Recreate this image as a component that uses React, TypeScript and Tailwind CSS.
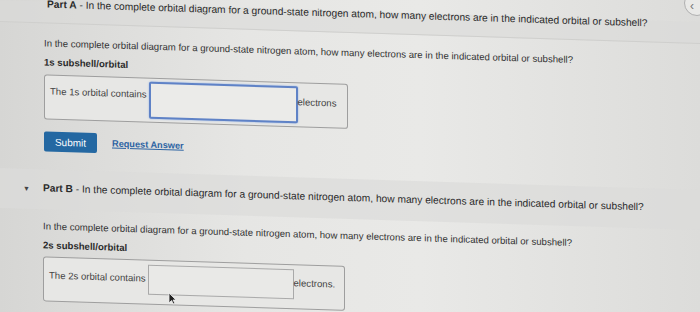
export default function App() {
  const q =
    "In the complete orbital diagram for a ground-state nitrogen atom, how many electrons are in the indicated orbital or subshell?";
  return (
    <div
      className="relative h-[312px] w-[700px] overflow-hidden bg-[linear-gradient(90deg,#d6d6d4,#e6e6e4_35%,#e9e9e7_60%,#dcdcda)] text-[#2b2b2b]"
      style={{ fontFamily: '"Liberation Sans", Arial, sans-serif' }}
    >
      {/* photo is a little tilted */}
      <div className="w-[720px] origin-top-left skew-y-[1.8deg]">
        <div className="flex h-[22px] items-start border-b border-[#cfcfcd] bg-[#dadad8]/60 pl-[47px] text-[10.2px]">
          <span className="-mt-[5px]">
            <b>Part A</b> - {q}
          </span>
        </div>

        <div className="pl-[44px] pt-[14px] text-[9.6px] leading-[11px]">
          <p className="text-[#333]">{q}</p>
          <p className="mt-[8px] font-bold">1s subshell/orbital</p>
          <div className="mt-[7px] flex h-[45px] w-[304px] items-start rounded-[3px] border border-[#9e9e9e] bg-[#e7e7e5] pl-[5px] pt-[3px]">
            <span className="mt-[7px] text-[#444]">The 1s orbital contains</span>
            <div className="ml-[2px] h-[37px] w-[149px] rounded-[2px] border-2 border-[#5f82c6] bg-[#ebebe9] shadow-[0_0_2px_#8fb0e8]" />
            <span className="mt-[10px] text-[#444]">electrons</span>
          </div>
          <div className="mt-[12px] flex items-center gap-[15px]">
            <button className="h-[20px] w-[53px] rounded-[2px] bg-[#2468a2] text-[10px] text-white">
              Submit
            </button>
            <span className="text-[9.2px] font-bold text-[#2d64a3] underline">
              Request Answer
            </span>
          </div>
        </div>

        <div className="mt-[18px] flex h-[40px] items-center bg-[#dcdcda]/70 pl-[23px] text-[10.2px]">
          <span className="mr-[13px] text-[7px] text-[#444]">▼</span>
          <span className="-mt-[3px]">
            <b>Part B</b> - {q}
          </span>
        </div>

        <div className="pl-[43px] pt-[11px] text-[9.6px] leading-[11px]">
          <p className="text-[#333]">{q}</p>
          <p className="mt-[8px] font-bold">2s subshell/orbital</p>
          <div className="mt-[6px] flex h-[45px] w-[302px] items-start rounded-[3px] border border-[#9e9e9e] bg-[#e7e7e5] pl-[5px] pt-[4px]">
            <span className="mt-[8px] text-[#444]">The 2s orbital contains</span>
            <div className="ml-[2px] h-[30px] w-[146px] border border-[#a9a9a9] bg-[#e9e9e7]" />
            <span className="mt-[8px] text-[#444]">electrons.</span>
          </div>
        </div>
      </div>

      <div className="absolute right-[-10px] top-[-10px] flex h-[26px] w-[26px] items-end justify-start rounded-full border border-[#b0b0b0] bg-[#e9e9e7] pb-[3px] pl-[5px] text-[12px] leading-none text-[#777]">
        ‹
      </div>

      <svg className="absolute left-[168px] top-[292px]" width="9" height="13" viewBox="0 0 9 13">
        <path d="M1 1 L1 11 L3.5 8.5 L5.5 12 L7 11.3 L5 8 L8 8 Z" fill="#222" stroke="#eee" strokeWidth="0.8" />
      </svg>
    </div>
  );
}
